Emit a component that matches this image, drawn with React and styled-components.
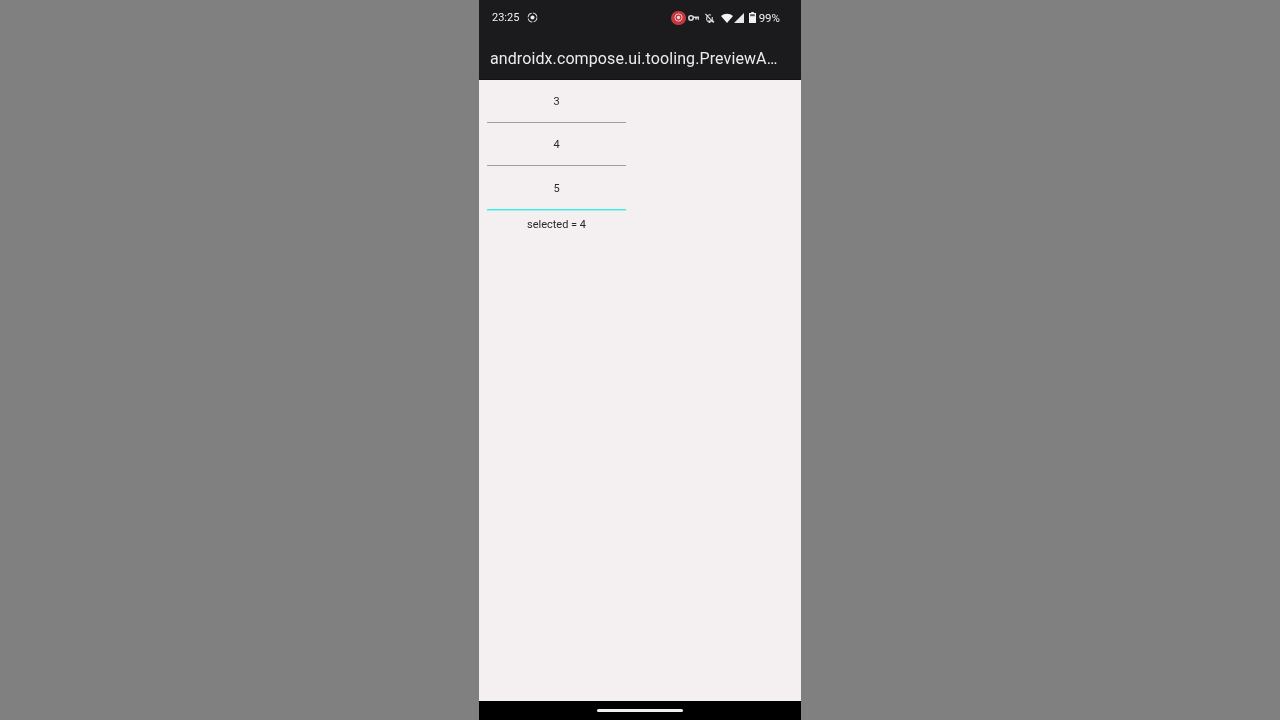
import React from "react";
import styled, { createGlobalStyle } from "styled-components";

const GlobalStyle = createGlobalStyle`
  html, body {
    margin: 0;
    padding: 0;
    height: 720px;
    overflow: hidden;
    background: #808080;
    font-family: Roboto, "Liberation Sans", sans-serif;
  }
`;

const Stage = styled.div`
  display: flex;
  justify-content: center;
  width: 1280px;
  height: 720px;
`;

const Phone = styled.div`
  display: flex;
  flex-direction: column;
  width: 322px;
  height: 720px;
  background: #f4eff0;
`;

const Header = styled.div`
  display: flex;
  flex-direction: column;
  height: 80px;
  background: #1b1b1d;
  box-sizing: border-box;
  border-bottom: 1px solid #111;
`;

const StatusBar = styled.div`
  display: flex;
  align-items: center;
  height: 35px;
  padding: 0 21px 0 13px;
  color: #f1f1f1;
  font-size: 11px;
  will-change: transform;
`;

const Time = styled.span`
  margin-right: 8px;
`;

const Spacer = styled.div`
  flex: 1;
`;

const StatusIcons = styled.div`
  display: flex;
  align-items: center;
  gap: 3px;
`;

const RecordBadge = styled.div`
  display: flex;
  align-items: center;
  justify-content: center;
  width: 15px;
  height: 14px;
  margin-right: -1px;
  border-radius: 7px;
  background: #c5363f;
`;

const Percent = styled.span`
  font-size: 11.5px;
`;

const Title = styled.div`
  padding: 11px 11px 0;
  color: #ececec;
  font-size: 16px;
  line-height: 26px;
  letter-spacing: 0.1px;
  white-space: nowrap;
  will-change: transform;
`;

const Content = styled.div`
  flex: 1;
  padding: 0 0 0 8px;
`;

const Picker = styled.div`
  display: flex;
  flex-direction: column;
  width: 139px;
`;

const Row = styled.div`
  display: flex;
  align-items: center;
  justify-content: center;
  height: ${(p) => p.$height}px;
  padding-top: ${(p) => p.$nudge || 0}px;
  box-sizing: border-box;
  color: #2a282c;
  font-size: 11px;
  will-change: transform;
`;

const Divider = styled.div`
  height: 1px;
  background: #a39d9f;
`;

const ActiveDivider = styled.div`
  height: 1px;
  background: #3eeede;
  box-shadow: 0 1px 0 rgba(62, 238, 222, 0.45);
`;

const Selected = styled.div`
  margin-top: 8px;
  color: #2a282c;
  font-size: 11px;
  line-height: 14px;
  text-align: center;
  will-change: transform;
`;

const NavBar = styled.div`
  display: flex;
  align-items: center;
  justify-content: center;
  height: 19px;
  background: #000;
`;

const Handle = styled.div`
  width: 86px;
  height: 3px;
  border-radius: 2px;
  background: #f0f0f0;
`;

export default function App() {
  return (
    <Stage>
      <GlobalStyle />
      <Phone>
        <Header>
          <StatusBar>
            <Time>23:25</Time>
            <svg width="11" height="11" viewBox="0 0 12 12" fill="none">
              <circle cx="6" cy="6" r="2.2" fill="#eee" />
              <circle cx="6" cy="6" r="4.8" stroke="#ddd" strokeWidth="1.1" strokeDasharray="6 1.5" />
            </svg>
            <Spacer />
            <StatusIcons>
              <RecordBadge>
                <svg width="9" height="9" viewBox="0 0 12 12" fill="none">
                  <circle cx="6" cy="6" r="2.2" fill="#f3d6d8" />
                  <circle cx="6" cy="6" r="4.8" stroke="#f3d6d8" strokeWidth="1.2" />
                </svg>
              </RecordBadge>
              <svg width="11" height="8" viewBox="0 0 11 8" fill="none" stroke="#d8d8d8" strokeWidth="1.6">
                <circle cx="3" cy="4" r="2.2" />
                <path d="M5 3.2h5.4v2.6M8 3.2v2.2" />
              </svg>
              <svg width="11" height="12" viewBox="0 0 12 12" fill="none" stroke="#e2e2e2" strokeWidth="1.2" style={{ marginLeft: 2 }}>
                <path d="M3 8.6V5.4A3 3 0 0 1 7.6 3M9 5v3.6l1 .8H3.4M5 10.8h2M1.5 1.5l9 9.5" />
              </svg>
              <svg width="12" height="10" viewBox="0 0 12 10" style={{ marginLeft: 3 }}>
                <path d="M0 3a9 9 0 0 1 12 0L6 10z" fill="#f4f4f4" />
              </svg>
              <svg width="10" height="10" viewBox="0 0 10 10" style={{ marginLeft: -2 }}>
                <path d="M10 0v10H0z" fill="#e8e8e8" />
              </svg>
              <svg width="7" height="11" viewBox="0 0 7 11" style={{ marginLeft: 2 }}>
                <path d="M2.2 0h2.6v1H7v10H0V1h2.2z" fill="#f2f2f2" />
                <rect x="1.2" y="2.2" width="4.6" height="2" fill="#55555a" />
              </svg>
              <Percent>99%</Percent>
            </StatusIcons>
          </StatusBar>
          <Title>androidx.compose.ui.tooling.PreviewA…</Title>
        </Header>
        <Content>
          <Picker>
            <Row $height={42}>3</Row>
            <Divider />
            <Row $height={42}>4</Row>
            <Divider />
            <Row $height={43} $nudge={1}>5</Row>
            <ActiveDivider />
            <Selected>selected = 4</Selected>
          </Picker>
        </Content>
        <NavBar>
          <Handle />
        </NavBar>
      </Phone>
    </Stage>
  );
}
